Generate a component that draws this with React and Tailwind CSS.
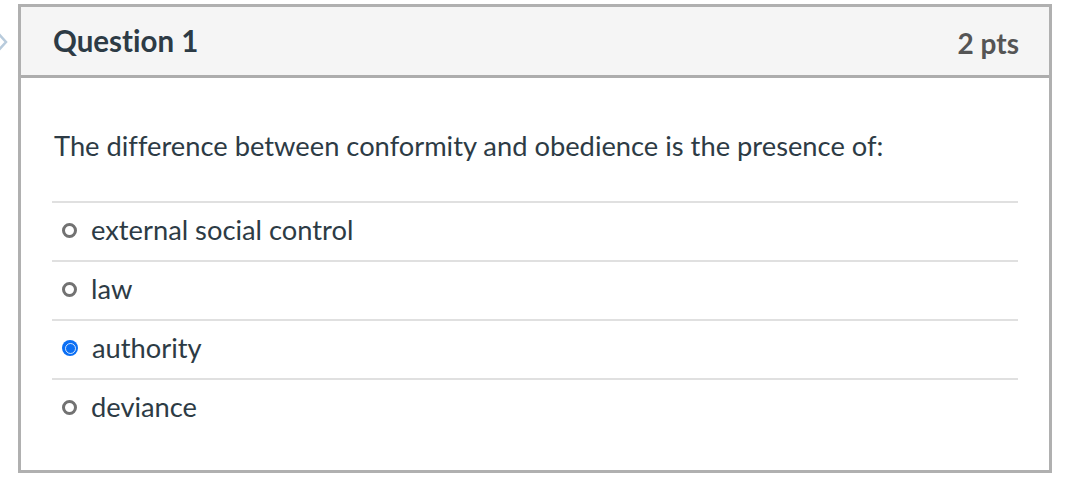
const answers = [
  { id: 1, label: 'external social control', checked: false },
  { id: 2, label: 'law', checked: false },
  { id: 3, label: 'authority', checked: true },
  { id: 4, label: 'deviance', checked: false },
];

function Radio({ checked }) {
  if (checked) {
    return (
      <span className="flex h-[16px] w-[16px] shrink-0 items-center justify-center rounded-full bg-[#0b6ff4]">
        <span className="h-[11px] w-[11px] rounded-full border border-white/80" />
      </span>
    );
  }
  return <span className="h-[15px] w-[15px] shrink-0 rounded-full border-[3px] border-[#727272] bg-white" />;
}

export default function App() {
  return (
    <div className="relative h-[484px] w-[1076px] bg-white font-['Lato','Open_Sans',sans-serif] text-[#2d3b45] [font-variant-ligatures:none]">
      {/* collapsed sidebar flag, mostly cut off */}
      <svg className="absolute left-0 top-[31px]" width="10" height="22" viewBox="0 0 10 22">
        <polyline points="-3,1 6,11 -3,21" fill="none" stroke="#b8cbdc" strokeWidth="2.5" />
      </svg>

      <div className="absolute left-[18px] top-[4px] flex h-[469px] w-[1034px] flex-col border-[3px] border-[#b0b0b0]">
        <div className="flex h-[71px] shrink-0 items-center justify-between border-b-[3px] border-[#adadad] bg-[#f5f5f5] pl-[32px] pr-[30px]">
          <h2 className="text-[29.5px] font-bold leading-none">Question 1</h2>
          <span className="pt-[4px] text-[28px] font-bold leading-none text-[#555555]">2 pts</span>
        </div>

        <div className="flex flex-col pl-[31px] pr-[31px]">
          <p className="pl-[2px] pt-[50px] text-[27.3px] leading-[35px]">
            The difference between conformity and obedience is the presence of:
          </p>

          <div className="mt-[38px] flex flex-col">
            {answers.map((a) => (
              <label
                key={a.id}
                className="flex h-[59px] items-center gap-[14px] border-t-[2px] border-[#e0e0e0] pb-[3px] pl-[10px]"
              >
                <Radio checked={a.checked} />
                <span className="text-[27.3px] leading-none">{a.label}</span>
              </label>
            ))}
          </div>
        </div>
      </div>
    </div>
  );
}
